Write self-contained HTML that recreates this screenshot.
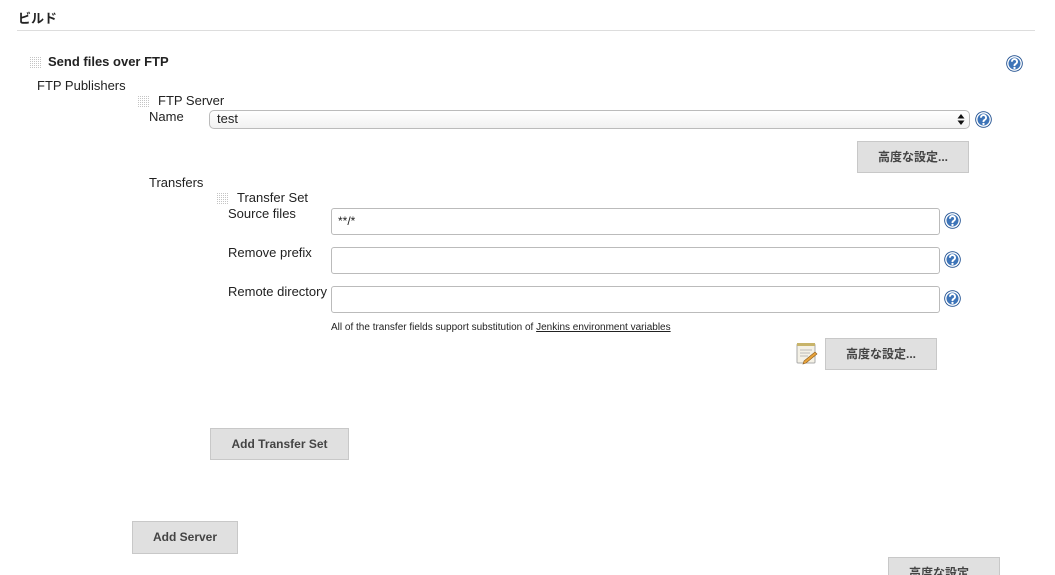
<!DOCTYPE html>
<html style="overflow:hidden"><head><meta charset="utf-8"><style>
body{margin:0;width:1055px;height:575px;overflow:hidden;background:#fff;font-family:"Liberation Sans","Noto Sans CJK JP",sans-serif;font-size:13px;color:#222;position:relative}
.a{position:absolute;white-space:nowrap}
.grip{position:absolute;width:11px;height:11px;background:repeating-linear-gradient(90deg,transparent 0 1px,#fff 1px 2px),repeating-linear-gradient(0deg,#c4c4c4 0 1px,#fff 1px 2px)}
.inp{position:absolute;border:1px solid #bbb;border-radius:3px;background:#fff;box-sizing:border-box}
.btn{position:absolute;box-sizing:border-box;background:#e0e0e0;border:1px solid #c8c8c8;font-weight:bold;color:#444;font-size:12px;text-align:center}
.help{position:absolute;width:17px;height:17px}
</style></head><body>
<div class="a" style="left:18px;top:8px;font-weight:bold;font-size:13px">ビルド</div>
<div class="a" style="left:17px;top:30px;width:1018px;height:1px;background:#ddd"></div>

<div class="grip" style="left:30px;top:57px"></div>
<div class="a" style="left:48px;top:54px;font-weight:bold">Send files over FTP</div>
<div class="a" style="left:37px;top:78px">FTP Publishers</div>

<div class="grip" style="left:138px;top:96px"></div>
<div class="a" style="left:158px;top:93px">FTP Server</div>
<div class="a" style="left:149px;top:109px">Name</div>
<div class="inp" style="left:209px;top:110px;width:761px;height:19px;border-radius:5px;background:linear-gradient(#fff,#f1f1f1)"></div>
<div class="a" style="left:217px;top:111px">test</div>
<svg class="a" style="left:957px;top:113px" width="8" height="13"><path d="M4 1L7.5 5.5H0.5Z M4 12L7.5 7.5H0.5Z" fill="#111"/></svg>

<div class="btn" style="left:857px;top:141px;width:112px;height:32px;line-height:30px">高度な設定...</div>

<div class="a" style="left:149px;top:175px">Transfers</div>
<div class="grip" style="left:217px;top:193px"></div>
<div class="a" style="left:237px;top:190px">Transfer Set</div>

<div class="a" style="left:228px;top:206px">Source files</div>
<div class="inp" style="left:331px;top:208px;width:609px;height:27px"></div>
<div class="a" style="left:338px;top:214px;font-size:12px">**/*</div>
<div class="a" style="left:228px;top:245px">Remove prefix</div>
<div class="inp" style="left:331px;top:247px;width:609px;height:27px"></div>
<div class="a" style="left:228px;top:284px">Remote directory</div>
<div class="inp" style="left:331px;top:286px;width:609px;height:27px"></div>
<div class="a" style="left:331px;top:322px;font-size:10px">All of the transfer fields support substitution of <span style="text-decoration:underline">Jenkins environment variables</span></div>

<svg class="a" style="left:796px;top:342px" width="23" height="23"><rect x="1" y="2" width="18" height="19" rx="1" fill="#f4f1e6" stroke="#aaa"/><rect x="1" y="1" width="18" height="3" fill="#c8b46a"/><path d="M4 8h12M4 11h10M4 14h8" stroke="#bbb"/><path d="M8 19l11-9 2 2-11 9-3 1z" fill="#e8a33a" stroke="#8a5a1a" stroke-width=".6"/></svg>
<div class="btn" style="left:825px;top:338px;width:112px;height:32px;line-height:30px">高度な設定...</div>

<div class="btn" style="left:210px;top:428px;width:139px;height:32px;line-height:30px">Add Transfer Set</div>
<div class="btn" style="left:132px;top:521px;width:106px;height:33px;line-height:31px">Add Server</div>
<div class="btn" style="left:888px;top:557px;width:112px;height:18px;line-height:30px;overflow:hidden;border-bottom:none">高度な設定...</div>

<svg width="0" height="0" style="position:absolute"><defs><symbol id="h" viewBox="0 0 16 16"><circle cx="8" cy="8" r="7.8" fill="#1f4f8f"/><circle cx="8" cy="8" r="6.3" fill="#3d74b8" stroke="#fff" stroke-width="1.3"/><path d="M5.6 6.3a2.4 2.4 0 1 1 3.4 2.1c-.7.4-1 .8-1 1.5v.4" fill="none" stroke="#fff" stroke-width="1.8"/><circle cx="8" cy="12.1" r="1.1" fill="#fff"/></symbol></defs></svg>
<svg class="help" style="left:1006px;top:55px"><use href="#h"/></svg>
<svg class="help" style="left:975px;top:111px"><use href="#h"/></svg>
<svg class="help" style="left:944px;top:212px"><use href="#h"/></svg>
<svg class="help" style="left:944px;top:251px"><use href="#h"/></svg>
<svg class="help" style="left:944px;top:290px"><use href="#h"/></svg>
</body></html>
